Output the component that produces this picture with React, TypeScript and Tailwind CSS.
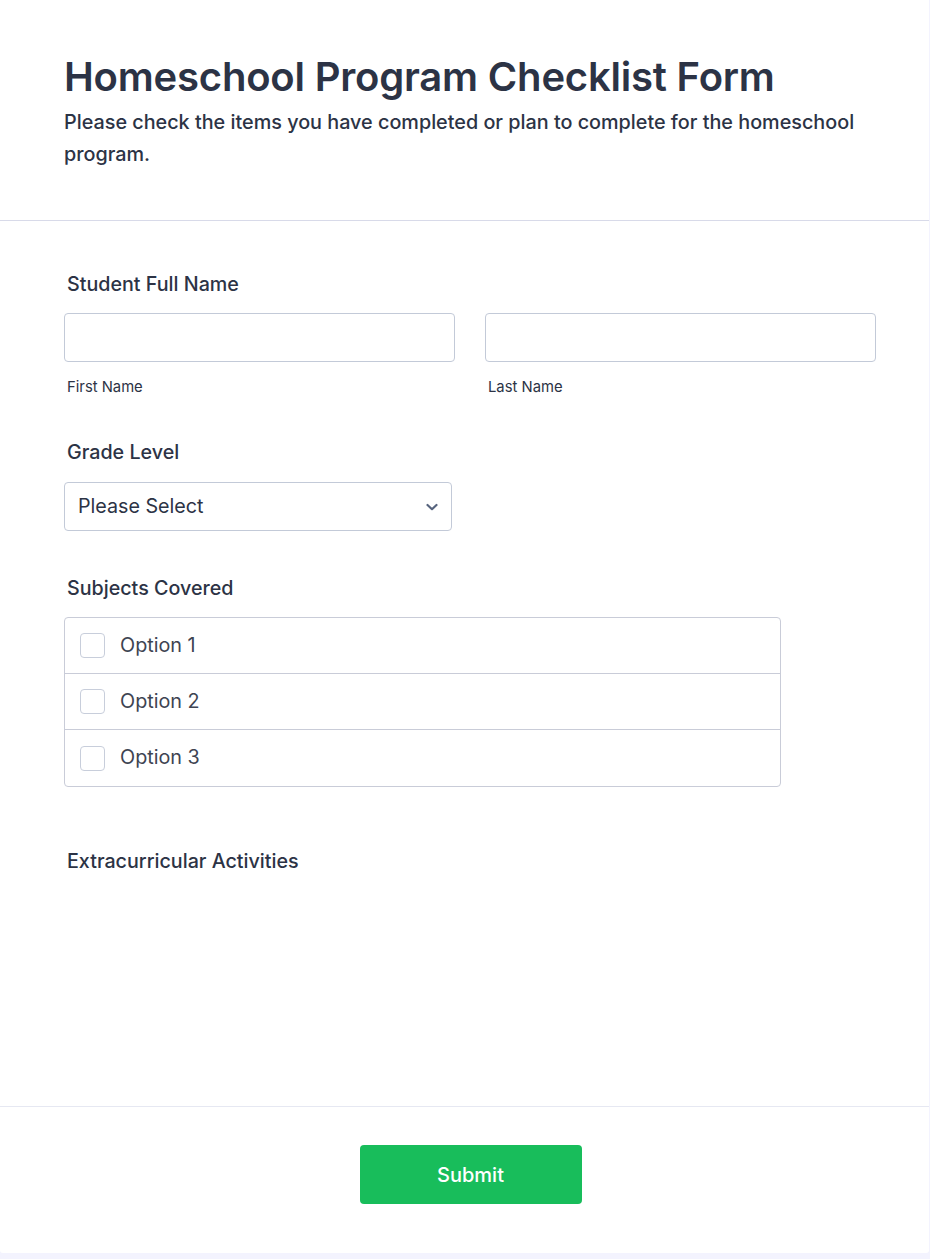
import React from "react";

export default function App() {
  const font = { fontFamily: "Inter, 'Noto Sans', sans-serif" };
  return (
    <div className="min-h-[1259px] bg-[#f3f3fe]" style={font}>
      <div className="w-[929px] bg-white rounded-b-[3px] text-[#2c3345]">
        {/* Header */}
        <div className="h-[221px] border-b border-[#d8dae9] pl-16 pr-12 pt-[53px]">
          <h1 className="text-[40px] leading-[48px] font-semibold tracking-[-0.2px]">
            Homeschool Program Checklist Form
          </h1>
          <p className="mt-[5px] text-[19.8px] leading-[32px] font-medium">
            Please check the items you have completed or plan to complete for the homeschool program.
          </p>
        </div>

        {/* Body */}
        <div className="h-[886px] border-b border-[#e6e8f2] pl-16 pr-[53px] pt-[49px]">
          {/* Student Full Name */}
          <div className="px-[3px] text-[19.7px] leading-[28px] font-medium">Student Full Name</div>
          <div className="mt-[15px] flex gap-[30px]">
            <div className="w-[391px] shrink-0">
              <div className="h-[49px] rounded-[4px] border border-[#c3cad8]" />
              <div className="mt-[16px] px-[3px] text-[14.8px] leading-[18px] text-[#2c3345]">First Name</div>
            </div>
            <div className="w-[391px] shrink-0">
              <div className="h-[49px] rounded-[4px] border border-[#c3cad8]" />
              <div className="mt-[16px] px-[3px] text-[14.8px] leading-[18px] text-[#2c3345]">Last Name</div>
            </div>
          </div>

          {/* Grade Level */}
          <div className="mt-[42px] px-[3px] text-[19.7px] leading-[28px] font-medium">Grade Level</div>
          <div className="mt-[16px] w-[388px] h-[49px] rounded-[4px] border border-[#c3cad8] flex items-center justify-between pl-[13px] pr-[12px]">
            <span className="text-[19.7px] text-[#2c3345]">Please Select</span>
            <svg width="14" height="14" viewBox="0 0 14 14" fill="none">
              <path d="M2.5 5 L7 9.2 L11.5 5" stroke="#57647e" strokeWidth="2.2" strokeLinecap="round" strokeLinejoin="round" />
            </svg>
          </div>

          {/* Subjects Covered */}
          <div className="mt-[43px] px-[3px] text-[19.7px] leading-[28px] font-medium">Subjects Covered</div>
          <div className="mt-[15px] w-[717px] rounded-[4px] border border-[#c9ccd8] flex flex-col">
            {["Option 1", "Option 2", "Option 3"].map((o, i) => (
              <div
                key={o}
                className={
                  i < 2
                    ? "h-[56px] flex items-center pl-[15px] gap-[15px] border-b border-[#c9ccd8]"
                    : "h-[56px] flex items-center pl-[15px] gap-[15px]"
                }
              >
                <div className="w-[25px] h-[25px] rounded-[4px] border border-[#c8cedb]" />
                <span className="text-[19.8px] text-[#3e4452]">{o}</span>
              </div>
            ))}
          </div>

          {/* Extracurricular Activities */}
          <div className="mt-[60px] px-[3px] text-[19.7px] leading-[28px] font-medium">Extracurricular Activities</div>
        </div>

        {/* Footer */}
        <div className="h-[146px] flex justify-center pt-[38px]">
          <button className="w-[222px] h-[59px] rounded-[4px] bg-[#18bd5b] text-white text-[20px] font-medium ml-[12px]">
            Submit
          </button>
        </div>
      </div>
    </div>
  );
}
